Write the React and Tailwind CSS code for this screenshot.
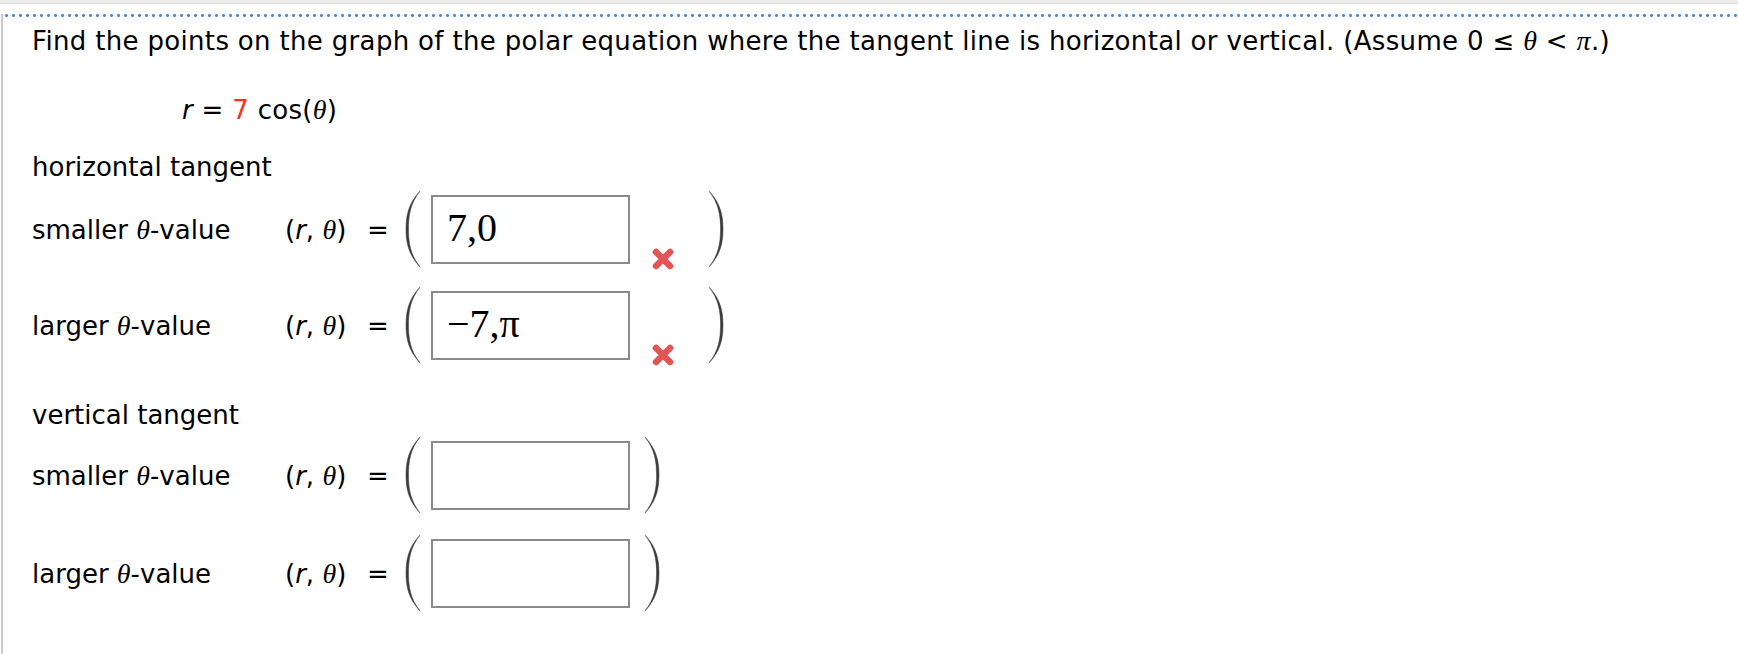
import React from "react";

// curved bracket drawn as a thin crescent, like the typeset one
function Paren({ right }) {
  const d = right
    ? "M2,1 C14,14 16,26 16,39 C16,52 14,64 2,77 C12,64 13.5,52 13.5,39 C13.5,26 12,14 2,1 Z"
    : "M15,1 C3,14 1,26 1,39 C1,52 3,64 15,77 C5,64 3.5,52 3.5,39 C3.5,26 5,14 15,1 Z";
  return (
    <svg width="17" height="78" viewBox="0 0 17 78" className="shrink-0">
      <path d={d} fill="#3c3c3c" stroke="#3c3c3c" strokeWidth="0.5" />
    </svg>
  );
}

function WrongMark() {
  return (
    <svg width="26" height="26" viewBox="0 0 26 26" className="shrink-0 self-end -mb-[4px] ml-[20px] blur-[0.5px]">
      <path d="M6 6 L20 20 M20 6 L6 20" stroke="#e35454" strokeWidth="6.5" strokeLinecap="round" />
    </svg>
  );
}

const Th = () => <span className="italic font-['Liberation_Serif',serif] text-[28px]">θ</span>;

function AnswerRow({ label, value, wrong, className }) {
  return (
    <div className={`flex items-center h-[78px] ${className}`}>
      <span className="w-[253px] shrink-0 mt-[1px]">
        {label} <Th />-value
      </span>
      <span className="w-[82px] shrink-0 mt-[1px]">
        (<span className="italic">r</span>, <Th />)
      </span>
      <span className="w-[38px] shrink-0 mt-[1px]">=</span>
      <Paren />
      <div className="ml-[9px] w-[199px] h-[69px] shrink-0 border-2 border-[#8a8a8a] bg-white pl-[14px] font-['Liberation_Serif',serif] text-[40px] leading-[61px]">
        {value}
      </div>
      {wrong ? (
        <>
          <WrongMark />
          <span className="ml-[31px]">
            <Paren right />
          </span>
        </>
      ) : (
        <span className="ml-[13px]">
          <Paren right />
        </span>
      )}
    </div>
  );
}

export default function App() {
  return (
    <div className="h-[654px] w-[1738px] bg-white text-black font-['DejaVu_Sans',Verdana,sans-serif] text-[26px] leading-[30px] overflow-hidden">
      <div className="h-[4px] bg-[#ebebeb] border-b border-[#dedede]" />
      <div className="ml-[1px] h-[650px] border-l-2 border-[#cacaca]">
        <div className="mt-[10px] h-[3px] bg-[radial-gradient(circle,#4586e4_1.2px,transparent_1.7px)] bg-[length:7px_3px] bg-repeat-x" />

        <div className="pl-[29px]">
          <p className="mt-[9px] whitespace-nowrap tracking-[0.33px]">
            Find the points on the graph of the polar equation where the tangent line is horizontal or vertical. (Assume 0 ≤{" "}
            <Th /> &lt; <span className="italic font-['Liberation_Serif',serif] text-[28px]">π</span>.)
          </p>

          <p className="mt-[39px] pl-[150px] tracking-[0.3px]">
            <span className="italic">r</span> = <span className="text-[#ee3524]">7</span> cos(<Th />)
          </p>

          <p className="mt-[27px]">horizontal tangent</p>

          <AnswerRow className="mt-[8px]" label="smaller" value="7,0" wrong />
          <AnswerRow className="mt-[18px]" label="larger" value="−7,π" wrong />

          <p className="mt-[36px]">vertical tangent</p>

          <AnswerRow className="mt-[6px]" label="smaller" value="" />
          <AnswerRow className="mt-[20px]" label="larger" value="" />
        </div>
      </div>
    </div>
  );
}
